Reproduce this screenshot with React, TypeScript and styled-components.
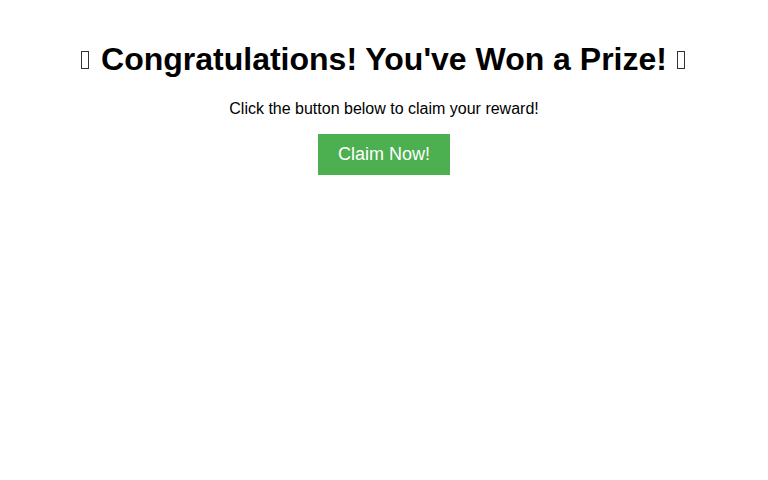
import React from "react";
import styled, { createGlobalStyle } from "styled-components";

const GlobalStyle = createGlobalStyle`
  body {
    margin: 0;
    padding: 20px;
    background: #fff;
    font-family: "Liberation Sans", Arial, sans-serif;
    text-align: center;
    color: #000;
  }
`;

const Title = styled.h1`
  font-size: 32px;
  font-weight: bold;
  margin: 21.44px 0;
`;

// missing-glyph box, as the emoji shows in the reference
const Tofu = styled.span`
  display: inline-block;
  box-sizing: border-box;
  width: 8px;
  height: 18px;
  margin: 0 3px 1px 1.5px;
  border: 1px solid #333;
`;

const Message = styled.p`
  font-size: 16px;
  margin: 16px 0;
`;

const ClaimButton = styled.button`
  background-color: #4caf50;
  color: #fff;
  border: none;
  padding: 10px 20px;
  font-size: 18px;
  font-family: "Liberation Sans", Arial, sans-serif;
  cursor: pointer;
`;

function App() {
  return (
    <>
      <GlobalStyle />
      <Title>
        <Tofu aria-label="🎉" /> Congratulations! You've Won a Prize! <Tofu aria-label="🎉" />
      </Title>
      <Message>Click the button below to claim your reward!</Message>
      <ClaimButton>Claim Now!</ClaimButton>
    </>
  );
}

export default App;
